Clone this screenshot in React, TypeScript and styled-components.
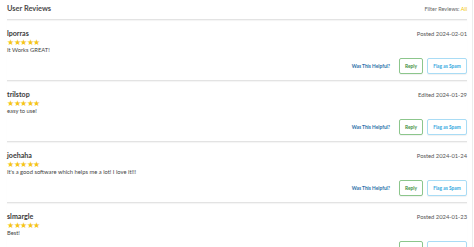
import React from "react";
import styled, { createGlobalStyle } from "styled-components";

const Global = createGlobalStyle`
  html, body { margin: 0; padding: 0; background: #fff; }
  body { font-family: Lato, "Open Sans", sans-serif; color: #444; }
`;

const Page = styled.div`
  width: 473px;
  box-sizing: border-box;
  border-right: 1px solid #ececec;
  padding: 0 5px 0 7px;
  min-height: 247px;
`;

const Header = styled.div`
  display: flex;
  justify-content: space-between;
  align-items: center;
  height: 19px;
  border-bottom: 1px solid #e3e3e3;
  box-shadow: 0 1px 1px rgba(0,0,0,0.04);
`;

const Title = styled.h2`
  margin: 0 0 2px;
  font-size: 7.4px;
  font-weight: 700;
  color: #4a4a4a;
`;

const Filter = styled.div`
  font-size: 5.5px;
  color: #666;
  margin-bottom: 2px;
  span { color: #f2c400; }
`;

const Review = styled.div`
  padding: 9px 0 6px;
  border-bottom: 1px solid #e3e3e3;
  box-shadow: 0 1px 1px rgba(0,0,0,0.04);
`;

const Top = styled.div`
  display: flex;
  justify-content: space-between;
  align-items: flex-start;
`;

const Info = styled.div`
  display: flex;
  flex-direction: column;
`;

const Name = styled.div`
  font-size: 7.1px;
  font-weight: 700;
  line-height: 10px;
  color: #3a3a3a;
`;

const Stars = styled.div`
  font-size: 8.2px;
  line-height: 7px;
  letter-spacing: -0.5px;
  color: #f5c518;
`;

const Body = styled.div`
  font-size: 5.8px;
  line-height: 8px;
  color: #444;
`;

const Date = styled.div`
  font-size: 5.8px;
  line-height: 10px;
  color: #555;
`;

const Actions = styled.div`
  display: flex;
  justify-content: flex-end;
  align-items: center;
  gap: 4px;
  margin-top: 4px;
`;

const Helpful = styled.a`
  font-size: 4.8px;
  font-weight: 700;
  color: #2a6fa8;
  margin-right: 5px;
`;

const Button = styled.button<{ $tone: "green" | "blue" }>`
  height: 16px;
  padding: 0 5px;
  min-width: ${(p) => (p.$tone === "green" ? "24px" : "40px")};
  font-family: Lato, sans-serif;
  font-size: 4.8px;
  font-weight: 700;
  background: #fff;
  border-radius: 2px;
  border: 1px solid ${(p) => (p.$tone === "green" ? "#8cc68c" : "#a9dcf5")};
  color: ${(p) => (p.$tone === "green" ? "#3f8f3f" : "#35a8e0")};
  box-shadow: 0 1px 1px rgba(0,0,0,0.06);
`;

const reviews = [
  { name: "lporras", text: "It Works GREAT!", date: "Posted 2024-02-01" },
  { name: "trilstop", text: "easy to use!", date: "Edited 2024-01-29" },
  { name: "joehaha", text: "It's a good software which helps me a lot! I love it!!!", date: "Posted 2024-01-24" },
  { name: "slmargle", text: "Best!", date: "Posted 2024-01-23" },
];

export default function App() {
  return (
    <Page>
      <Global />
      <Header>
        <Title>User Reviews</Title>
        <Filter>
          Filter Reviews: <span>All</span>
        </Filter>
      </Header>
      {reviews.map((r) => (
        <Review key={r.name}>
          <Top>
            <Info>
              <Name>{r.name}</Name>
              <Stars>★★★★★</Stars>
              <Body>{r.text}</Body>
            </Info>
            <Date>{r.date}</Date>
          </Top>
          <Actions>
            <Helpful>Was This Helpful?</Helpful>
            <Button $tone="green">Reply</Button>
            <Button $tone="blue">Flag as Spam</Button>
          </Actions>
        </Review>
      ))}
    </Page>
  );
}
